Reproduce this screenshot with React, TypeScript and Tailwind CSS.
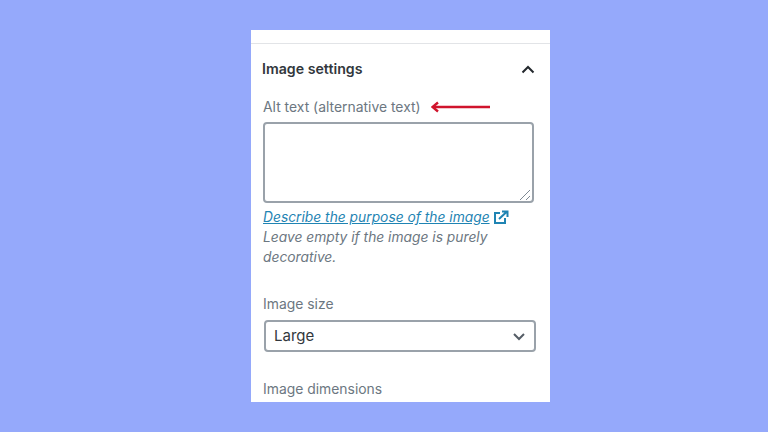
const font = { fontFamily: "Inter, 'Noto Sans', sans-serif" };

export default function App() {
  return (
    <div className="w-[768px] h-[432px] overflow-hidden bg-[#95a9fb] flex pl-[251px] pt-[30px]" style={font}>
      <div className="w-[299px] h-[372px] bg-white overflow-hidden flex flex-col">
        <div className="h-[14px] border-b border-[#e2e4e7] shrink-0" />

        <div className="flex items-center justify-between pl-[11px] pr-[15px] mt-[16px] h-[18px] shrink-0">
          <span className="text-[14.2px] leading-[18px] font-semibold text-[#32373c]">Image settings</span>
          <svg width="14" height="9" viewBox="0 0 14 9" fill="none">
            <path d="M1.5 7.5 L7 2 L12.5 7.5" stroke="#23282d" strokeWidth="2" />
          </svg>
        </div>

        <div className="flex items-center pl-[12px] mt-[20px] h-[18px] shrink-0">
          <span className="text-[13.9px] leading-[18px] text-[#6c7781]">Alt text (alternative text)</span>
          <svg className="ml-[10px]" width="60" height="12" viewBox="0 0 60 12" fill="none">
            <path d="M2 6 H59" stroke="#d0142c" strokeWidth="2.4" />
            <path d="M7 1.5 L1.5 6 L7 10.5" stroke="#d0142c" strokeWidth="2.4" />
          </svg>
        </div>

        <div className="relative ml-[12px] mt-[6px] w-[271px] h-[81px] shrink-0 rounded-[4px] border-2 border-[#9aa2aa]">
          <svg className="absolute right-[0px] bottom-[0px]" width="13" height="13" viewBox="0 0 13 13" fill="none">
            <path d="M1 12 L11 2 M7 12 L11 8" stroke="#7e8993" strokeWidth="1" />
          </svg>
        </div>

        <div className="pl-[12px] mt-[5px] flex items-center h-[18px] shrink-0">
          <span className="text-[13.8px] leading-[18px] italic text-[#1f84b3] underline">Describe the purpose of the image</span>
          <svg className="ml-[3px]" width="16" height="15" viewBox="0 0 16 15" fill="none">
            <path d="M7 3 H2 V13 H12 V8" stroke="#1f84b3" strokeWidth="2" />
            <path d="M6 9 L14 1.5 M9 1.5 H14.5 V7" stroke="#1f84b3" strokeWidth="2" />
          </svg>
        </div>

        <p className="pl-[12px] pr-[20px] mt-[1px] text-[13.8px] leading-[20px] italic text-[#6c7781]">
          Leave empty if the image is purely decorative.
        </p>

        <div className="pl-[12px] mt-[28px] text-[13.9px] leading-[18px] text-[#6c7781]">Image size</div>

        <div className="ml-[13px] mt-[7px] w-[272px] h-[32px] shrink-0 rounded-[4px] border-2 border-[#9aa2aa] flex items-center justify-between pl-[8px] pr-[8px]">
          <span className="text-[15px] leading-[18px] text-[#32373c]">Large</span>
          <svg width="14" height="9" viewBox="0 0 14 9" fill="none">
            <path d="M2 2 L7 7 L12 2" stroke="#555d66" strokeWidth="2" />
          </svg>
        </div>

        <div className="pl-[12px] mt-[28px] text-[13.9px] leading-[18px] text-[#6c7781]">Image dimensions</div>
      </div>
    </div>
  );
}
